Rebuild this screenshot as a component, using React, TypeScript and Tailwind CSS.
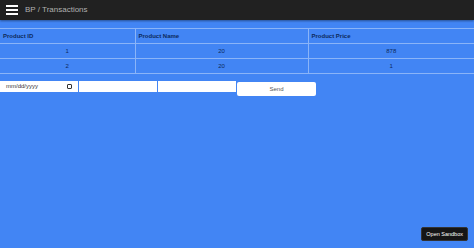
import React from 'react';

const rows = [
  { id: 1, name: 20, price: 878 },
  { id: 2, name: 20, price: 1 },
];

const App: React.FC = () => {
  return (
    <div className="min-h-screen h-[248px] bg-[#4285f4] flex flex-col font-['Liberation_Sans',Arial,sans-serif] relative">
      <header className="h-[20px] bg-[#212121] flex items-center px-[6px] gap-[7px] shadow-[0_1px_2px_rgba(0,0,0,0.4)]">
        <div className="flex flex-col gap-[2px] w-[12px]">
          <span className="h-[2px] bg-white" />
          <span className="h-[2px] bg-white" />
          <span className="h-[2px] bg-white" />
        </div>
        <span className="text-[8px] text-[#b0b0b0]">BP / Transactions</span>
      </header>

      <table className="mt-[8px] w-full border-collapse text-[6px] text-[#0d2a5c]">
        <thead>
          <tr className="h-[15px]">
            <th className="w-[135px] border border-[#8ab4f8] border-l-0 text-left font-bold pl-[3px]">Product ID</th>
            <th className="w-[173px] border border-[#8ab4f8] text-left font-bold pl-[3px]">Product Name</th>
            <th className="border border-[#8ab4f8] border-r-0 text-left font-bold pl-[3px]">Product Price</th>
          </tr>
        </thead>
        <tbody>
          {rows.map((r) => (
            <tr key={r.id} className="h-[15px]">
              <td className="border border-[#8ab4f8] border-l-0 text-center">{r.id}</td>
              <td className="border border-[#8ab4f8] text-center">{r.name}</td>
              <td className="border border-[#8ab4f8] border-r-0 text-center">{r.price}</td>
            </tr>
          ))}
        </tbody>
      </table>

      <div className="mt-[7px] flex items-start gap-[1px]">
        <div className="w-[78px] h-[11px] bg-white flex items-center justify-between px-[6px]">
          <span className="text-[6px] text-[#333]">mm/dd/yyyy</span>
          <span className="w-[5px] h-[5px] border border-[#333] rounded-[1px]" />
        </div>
        <input className="w-[78px] h-[11px] bg-white outline-none" />
        <input className="w-[78px] h-[11px] bg-white outline-none" />
        <button className="w-[79px] h-[14px] mt-[1px] bg-white rounded-[2px] text-[6px] text-[#555]">Send</button>
      </div>

      <button className="absolute right-[6px] bottom-[7px] bg-[#151515] text-white text-[5.5px] px-[4px] h-[14px] rounded-[2px] border border-[#333]">
        Open Sandbox
      </button>
    </div>
  );
};

export default App;
